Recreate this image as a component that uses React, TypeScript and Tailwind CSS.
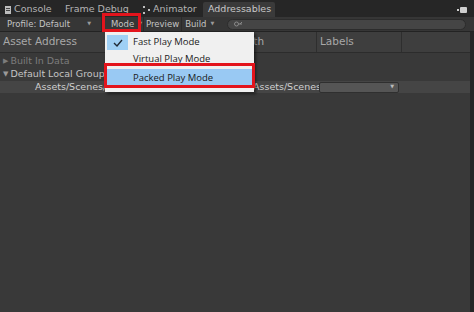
import React from 'react';

const uiFont = { fontFamily: '"DejaVu Sans", Verdana, sans-serif' };

// 标签页
const Tab: React.FC<{ label: string; icon?: React.ReactNode; active?: boolean; width: string }> = ({
  label,
  icon,
  active,
  width
}) => (
  <div
    className={`flex h-[15px] items-center gap-[3px] whitespace-nowrap pl-[5px] text-[9.5px] ${width} ${active ? 'rounded-t-[2px] bg-[#3a3a3a] text-[#c8c8c8]' : 'text-[#b4b4b4]'}`}
  >
    {icon}
    <span>{label}</span>
  </div>
);

const ConsoleIcon = () => (
  <svg width="6" height="8" viewBox="0 0 6 8">
    <rect x="0" y="0" width="6" height="8" fill="#bdbdbd" />
    <rect x="1" y="2" width="4" height="1" fill="#444" />
    <rect x="1" y="4" width="4" height="1" fill="#444" />
  </svg>
);

const AnimatorIcon = () => (
  <svg width="7" height="8" viewBox="0 0 7 8">
    <rect x="0" y="0" width="2" height="2" fill="#bdbdbd" />
    <rect x="0" y="6" width="2" height="2" fill="#bdbdbd" />
    <rect x="5" y="3" width="2" height="2" fill="#bdbdbd" />
  </svg>
);

const Arrow = () => <span className="ml-[4px] text-[5px] text-[#9a9a9a]">▼</span>;

export default function App() {
  return (
    <div className="relative flex h-[312px] w-[474px] flex-col overflow-hidden bg-[#393939]" style={uiFont}>
      {/* 标签栏 */}
      <div className="flex h-[17px] items-end bg-[#262626]">
        <Tab icon={<ConsoleIcon />} label="Console" width="w-[60px]" />
        <Tab label="Frame Debug" width="w-[78px]" />
        <Tab icon={<AnimatorIcon />} label="Animator" width="w-[65px]" />
        <Tab active label="Addressables" width="w-[72px]" />
        <div className="flex-1" />
        <div className="mb-[4px] mr-[7px] flex items-center gap-[1px]">
          <span className="h-[2px] w-[2px] bg-[#cfcfcf]" />
          <span className="h-[6px] w-[7px] rounded-[1px] bg-[#cfcfcf]" />
        </div>
      </div>

      {/* 工具栏 */}
      <div className="flex h-[15px] items-center border-b border-[#232323] bg-[#363636] text-[8.5px] text-[#c4c4c4]">
        <div className="flex w-[101px] items-center pl-[7px]">
          <span>Profile: Default</span>
          <span className="ml-auto mr-[10px] text-[5px] text-[#9a9a9a]">▼</span>
        </div>
        <div className="h-full w-px bg-[#2a2a2a]" />
        <div className="flex items-center pl-[9px]">
          <span>Mode</span>
          <Arrow />
        </div>
        <div className="ml-[1px] h-full w-px bg-[#2a2a2a]" />
        <div className="px-[2px]">Preview</div>
        <div className="h-full w-px bg-[#2a2a2a]" />
        <div className="flex items-center pl-[3px]">
          <span>Build</span>
          <Arrow />
        </div>
        <div className="ml-[13px] mr-[8px] flex h-[11px] flex-1 items-center rounded-[6px] border border-[#2c2c2c] bg-[#454545] pl-[6px]">
          <svg width="9" height="6" viewBox="0 0 9 6">
            <circle cx="2.5" cy="3" r="2" fill="none" stroke="#8a8a8a" strokeWidth="1" />
            <path d="M4.5 3 H8 M6 3 L8 1" stroke="#8a8a8a" strokeWidth="1" fill="none" />
          </svg>
        </div>
      </div>

      <div className="flex flex-1">
        <div className="flex flex-1 flex-col">
          {/* 表头 */}
          <div className="flex h-[21px] items-center border-b border-[#2c2c2c] bg-[#3e3e3e] text-[10.5px] text-[#a8a8a8]">
            <div className="w-[238px] pl-[3px]">Asset Address</div>
            <div className="w-[78px] pl-[3px]">Path</div>
            <div className="h-full w-px bg-[#2e2e2e]" />
            <div className="w-[84px] pl-[3px]">Labels</div>
            <div className="h-full w-px bg-[#2e2e2e]" />
          </div>

          {/* 树形列表 */}
          <div className="mt-[2px] flex h-[13px] items-center pl-[3px] text-[9.5px] text-[#7c7c7c]">
            <span className="mr-[2px] text-[7px]">▶</span>
            <span>Built In Data</span>
          </div>
          <div className="flex h-[13px] items-center pl-[3px] text-[9.5px] text-[#c4c4c4]">
            <span className="mr-[2px] text-[7px] text-[#9a9a9a]">▼</span>
            <span>Default Local Group</span>
          </div>
          <div className="flex h-[12px] items-center bg-[#454545] text-[9.5px] text-[#d0d0d0]">
            <div className="w-[253px] pl-[35px]">Assets/Scenes/</div>
            <div className="w-[66px] overflow-hidden whitespace-nowrap">Assets/Scenes</div>
            <div className="flex h-[11px] w-[80px] items-center justify-end rounded-[2px] border border-[#2f2f2f] bg-[#555] pr-[4px]">
              <span className="text-[5px] text-[#bbb]">▼</span>
            </div>
          </div>
        </div>
        <div className="w-[4px] bg-[#262626]" />
      </div>

      {/* Mode 下拉菜单 */}
      <div
        className="absolute left-[105px] top-[32px] flex w-[149px] flex-col bg-[#f0f0f0] py-[2px] text-[9.5px] text-[#1a1a1a] shadow-[2px_2px_3px_rgba(0,0,0,0.5)]"
        style={{ fontFamily: '"Open Sans", "Noto Sans", sans-serif' }}
      >
        <div className="flex h-[17px] items-center">
          <div className="ml-[2px] flex h-[15px] w-[21px] items-center justify-center bg-[#9fd0f5]">
            <svg width="10" height="8" viewBox="0 0 10 8">
              <path d="M1 4 L4 7 L9 1" stroke="#1f2a36" strokeWidth="1.4" fill="none" />
            </svg>
          </div>
          <span className="ml-[5px]">Fast Play Mode</span>
        </div>
        <div className="flex h-[17px] items-center pl-[28px]">Virtual Play Mode</div>
        <div className="mx-[2px] mt-[1px] flex h-[18px] items-center bg-[#99c9f3] pl-[26px]">Packed Play Mode</div>
        <div className="h-[3px]" />
      </div>

      {/* 红色标注框 */}
      <div className="absolute left-[102px] top-[13px] h-[19px] w-[39px] border-[3px] border-[#e3141c]" />
      <div className="absolute left-[104px] top-[63px] h-[25px] w-[151px] border-[3px] border-[#e3141c]" />
    </div>
  );
}
